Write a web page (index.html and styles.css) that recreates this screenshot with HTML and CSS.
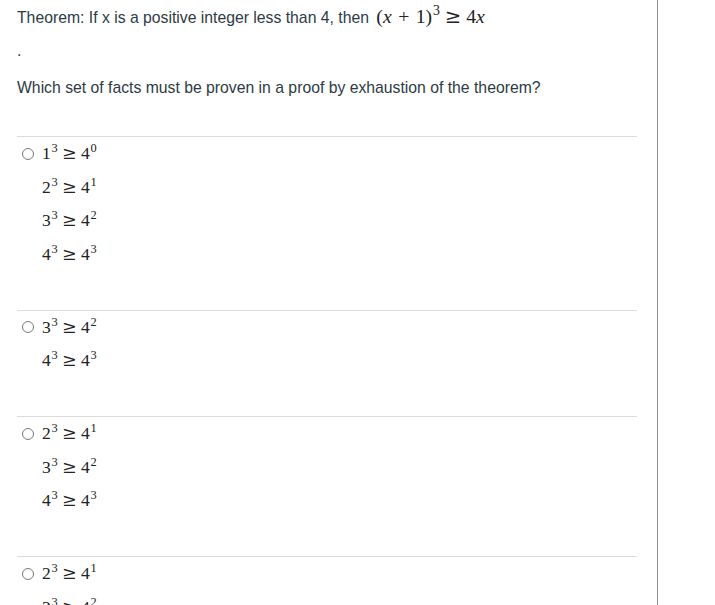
FILE: index.html
```html
<!DOCTYPE html>
<html>
<head>
<meta charset="utf-8">
<link rel="stylesheet" href="styles.css">
</head>
<body>
<div class="page">
  <div class="main">
    <p class="theorem">Theorem: If x is a positive integer less than 4, then <span class="mathbig">(<i>x</i><span class="op">+</span>1)<sup>3</sup><span class="ge">≥</span>4<i>x</i></span></p>
    <p class="dot">.</p>
    <p class="question">Which set of facts must be proven in a proof by exhaustion of the theorem?</p>
    <div class="options">
      <div class="option">
        <div class="row"><span class="radio"></span><span class="math">1<sup>3</sup><span class="ge">≥</span>4<sup>0</sup></span></div>
        <div class="row"><span class="math">2<sup>3</sup><span class="ge">≥</span>4<sup>1</sup></span></div>
        <div class="row"><span class="math">3<sup>3</sup><span class="ge">≥</span>4<sup>2</sup></span></div>
        <div class="row"><span class="math">4<sup>3</sup><span class="ge">≥</span>4<sup>3</sup></span></div>
      </div>
      <div class="option">
        <div class="row"><span class="radio"></span><span class="math">3<sup>3</sup><span class="ge">≥</span>4<sup>2</sup></span></div>
        <div class="row"><span class="math">4<sup>3</sup><span class="ge">≥</span>4<sup>3</sup></span></div>
      </div>
      <div class="option">
        <div class="row"><span class="radio"></span><span class="math">2<sup>3</sup><span class="ge">≥</span>4<sup>1</sup></span></div>
        <div class="row"><span class="math">3<sup>3</sup><span class="ge">≥</span>4<sup>2</sup></span></div>
        <div class="row"><span class="math">4<sup>3</sup><span class="ge">≥</span>4<sup>3</sup></span></div>
      </div>
      <div class="option">
        <div class="row"><span class="radio"></span><span class="math">2<sup>3</sup><span class="ge">≥</span>4<sup>1</sup></span></div>
        <div class="row"><span class="math">3<sup>3</sup><span class="ge">≥</span>4<sup>2</sup></span></div>
        <div class="row"><span class="math">4<sup>3</sup><span class="ge">≥</span>4<sup>3</sup></span></div>
      </div>
    </div>
  </div>
  <div class="divider"></div>
</div>
</body>
</html>
```

FILE: styles.css
```css
html, body {
  margin: 0;
  padding: 0;
  background: #ffffff;
}
body {
  font-family: "Liberation Sans", Arial, sans-serif;
  font-size: 15.75px;
  color: #2d3b45;
  overflow: hidden;
  height: 605px;
}
.page {
  display: flex;
  align-items: stretch;
  height: 605px;
}
.main {
  width: 620px;
  flex: 0 0 620px;
  padding: 0 20px 0 17px;
  height: 605px;
  overflow: hidden;
}
.divider {
  flex: 0 0 1px;
  width: 1px;
  height: 605px;
  background: #8e8e8e;
}
p {
  margin: 0;
  line-height: 20px;
  height: 20px;
}
.theorem {
  margin-top: 6px;
  white-space: nowrap;
}
.dot {
  margin-top: 15px;
}
.question {
  margin-top: 17px;
}
.options {
  margin-top: 38px;
}
.option {
  border-top: 1px solid #dcdcdc;
  padding-bottom: 38.5px;
}
.row {
  height: 33.5px;
  display: flex;
  align-items: center;
  padding-left: 25px;
  position: relative;
}
.radio {
  position: absolute;
  left: 5px;
  top: 50%;
  margin-top: -6px;
  width: 10px;
  height: 10px;
  border: 1px solid #7a7a7a;
  border-radius: 50%;
  box-sizing: content-box;
}
.math {
  font-family: "Liberation Serif", "DejaVu Serif", serif;
  font-size: 17.5px;
  color: #222;
  white-space: nowrap;
}
.math sup, .mathbig sup {
  font-size: 0.707em;
  vertical-align: 0.55em;
  line-height: 0;
  margin-left: 0.06em;
}
.mathbig {
  font-family: "Liberation Serif", "DejaVu Serif", serif;
  font-size: 19.7px;
  color: #222;
  margin-left: 3px;
  white-space: nowrap;
}
.op {
  margin: 0 0.33em;
}
.ge {
  margin: 0 0.25em;
  font-family: "DejaVu Serif", serif;
}
```
